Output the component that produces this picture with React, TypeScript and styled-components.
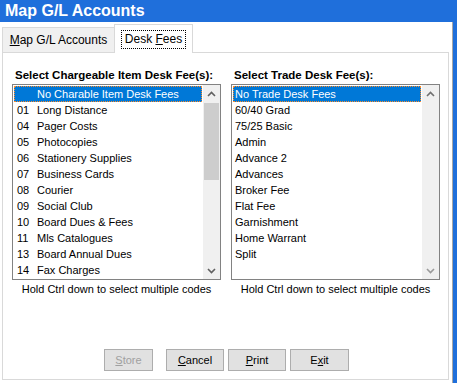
import React from 'react';
import styled, { createGlobalStyle } from 'styled-components';

const Global = createGlobalStyle`
  html, body { margin: 0; padding: 0; background: #fff; }
  body { font-family: "Liberation Sans", Arial, sans-serif; color: #000; }
`;

const Window = styled.div`
  width: 457px;
  height: 383px;
  box-sizing: border-box;
  display: flex;
  flex-direction: column;
  background: #fff;
  border-right: 4px solid #1f6fdb;
  overflow: hidden;
`;

const TitleBar = styled.div`
  height: 22px;
  box-sizing: border-box;
  flex: none;
  background: #1f6fdb;
  color: #fff;
  font-weight: bold;
  font-size: 16px;
  display: flex;
  align-items: center;
  padding: 0 0 1px 5px;
`;

const Body = styled.div`
  flex: 1;
  display: flex;
  flex-direction: column;
  border-right: 1px solid #a8a8a8;
  padding: 0 3px 3px 2px;
  min-height: 0;
`;

const TabStrip = styled.div`
  height: 30px;
  flex: none;
  display: flex;
  align-items: flex-end;
  position: relative;
  z-index: 1;
`;

const Tab = styled.div<{ $active?: boolean; $w: number }>`
  box-sizing: border-box;
  width: ${p => p.$w}px;
  height: ${p => (p.$active ? 29 : 25)}px;
  margin-bottom: ${p => (p.$active ? -1 : 0)}px;
  margin-left: ${p => (p.$active ? -1 : 0)}px;
  border: 1px solid #d9d9d9;
  border-bottom: none;
  background: ${p => (p.$active ? '#fff' : '#f0f0f0')};
  display: flex;
  align-items: center;
  justify-content: center;
  font-size: 12px;
  white-space: nowrap;
`;

const FocusText = styled.span`
  border: 1px dotted #000;
  padding: 1px 3px;
  line-height: 15px;
`;

const U = styled.span`
  text-decoration: underline;
`;

const Panel = styled.div`
  flex: 1;
  box-sizing: border-box;
  border: 1px solid #d9d9d9;
  display: flex;
  flex-direction: column;
  padding: 15px 8px 8px 9px;
`;

const Columns = styled.div`
  display: flex;
  gap: 10px;
`;

const Column = styled.div`
  width: 209px;
  display: flex;
  flex-direction: column;
`;

const Label = styled.div`
  font-weight: bold;
  font-size: 11.5px;
  line-height: 14px;
  padding-left: 3px;
  margin-bottom: 2px;
  white-space: nowrap;
`;

const ListBox = styled.div`
  height: 196px;
  box-sizing: border-box;
  border: 1px solid #828282;
  display: flex;
  background: #fff;
`;

const Items = styled.div`
  flex: 1;
  padding: 1px;
  overflow: hidden;
`;

const Row = styled.div<{ $selected?: boolean }>`
  height: 16px;
  display: flex;
  align-items: center;
  font-size: 11px;
  padding-left: 2px;
  white-space: nowrap;
  background: ${p => (p.$selected ? '#0078d7' : 'transparent')};
  color: ${p => (p.$selected ? '#fff' : '#000')};
  outline: ${p => (p.$selected ? '1px dotted #ff8c28' : 'none')};
  outline-offset: -1px;
`;

const Code = styled.span`
  width: 21px;
  padding-left: 1px;
  box-sizing: border-box;
  flex: none;
`;

const ScrollBar = styled.div`
  width: 17px;
  flex: none;
  background: #f0f0f0;
  display: flex;
  flex-direction: column;
`;

const ArrowBox = styled.div`
  height: 17px;
  flex: none;
  display: flex;
  align-items: center;
  justify-content: center;
`;

const Track = styled.div`
  flex: 1;
  padding: 1px 1px;
`;

const Thumb = styled.div`
  height: 77px;
  background: #cdcdcd;
`;

const Hint = styled.div`
  font-size: 11px;
  line-height: 14px;
  text-align: center;
  margin-top: 2px;
  white-space: nowrap;
`;

const ButtonRow = styled.div`
  margin-top: auto;
  display: flex;
  padding-left: 92px;
`;

const Button = styled.button<{ $w: number; $ml: number; $disabled?: boolean }>`
  width: ${p => p.$w}px;
  height: 22px;
  margin: 0 0 0 ${p => p.$ml}px;
  padding: 0;
  box-sizing: border-box;
  background: #e1e1e1;
  border: 1px solid #adadad;
  font-family: "Liberation Sans", Arial, sans-serif;
  font-size: 11px;
  color: ${p => (p.$disabled ? '#a0a0a0' : '#000')};
`;

const Chevron: React.FC<{ up?: boolean; color: string }> = ({ up, color }) => (
  <svg width="9" height="6" viewBox="0 0 9 6">
    <polyline
      points={up ? '1,5 4.5,1.5 8,5' : '1,1 4.5,4.5 8,1'}
      fill="none"
      stroke={color}
      strokeWidth="1.6"
    />
  </svg>
);

const chargeable: [string, string][] = [
  ['01', 'Long Distance'],
  ['04', 'Pager Costs'],
  ['05', 'Photocopies'],
  ['06', 'Stationery Supplies'],
  ['07', 'Business Cards'],
  ['08', 'Courier'],
  ['09', 'Social Club'],
  ['10', 'Board Dues & Fees'],
  ['11', 'Mls Catalogues'],
  ['13', 'Board Annual Dues'],
  ['14', 'Fax Charges'],
];

const trade = [
  '60/40 Grad',
  '75/25 Basic',
  'Admin',
  'Advance 2',
  'Advances',
  'Broker Fee',
  'Flat Fee',
  'Garnishment',
  'Home Warrant',
  'Split',
];

export default function App() {
  return (
    <>
      <Global />
      <Window>
        <TitleBar>Map G/L Accounts</TitleBar>
        <Body>
          <TabStrip>
            <Tab $w={113}>
              <span><U>M</U>ap G/L Accounts</span>
            </Tab>
            <Tab $active $w={79}>
              <FocusText>Desk <U>F</U>ees</FocusText>
            </Tab>
          </TabStrip>
          <Panel>
            <Columns>
              <Column>
                <Label>Select Chargeable Item Desk Fee(s):</Label>
                <ListBox>
                  <Items>
                    <Row $selected>
                      <Code />
                      No Charable Item Desk Fees
                    </Row>
                    {chargeable.map(([c, n]) => (
                      <Row key={c}>
                        <Code>{c}</Code>
                        {n}
                      </Row>
                    ))}
                  </Items>
                  <ScrollBar>
                    <ArrowBox><Chevron up color="#606060" /></ArrowBox>
                    <Track><Thumb /></Track>
                    <ArrowBox><Chevron color="#606060" /></ArrowBox>
                  </ScrollBar>
                </ListBox>
                <Hint>Hold Ctrl down to select multiple codes</Hint>
              </Column>
              <Column>
                <Label>Select Trade Desk Fee(s):</Label>
                <ListBox>
                  <Items>
                    <Row $selected>No Trade Desk Fees</Row>
                    {trade.map(t => (
                      <Row key={t}>{t}</Row>
                    ))}
                  </Items>
                  <ScrollBar>
                    <ArrowBox><Chevron up color="#707070" /></ArrowBox>
                    <Track />
                    <ArrowBox><Chevron color="#9a9a9a" /></ArrowBox>
                  </ScrollBar>
                </ListBox>
                <Hint>Hold Ctrl down to select multiple codes</Hint>
              </Column>
            </Columns>
            <ButtonRow>
              <Button $w={49} $ml={0} $disabled><U>S</U>tore</Button>
              <Button $w={58} $ml={13}><U>C</U>ancel</Button>
              <Button $w={58} $ml={4}><U>P</U>rint</Button>
              <Button $w={59} $ml={4}>E<U>x</U>it</Button>
            </ButtonRow>
          </Panel>
        </Body>
      </Window>
    </>
  );
}
